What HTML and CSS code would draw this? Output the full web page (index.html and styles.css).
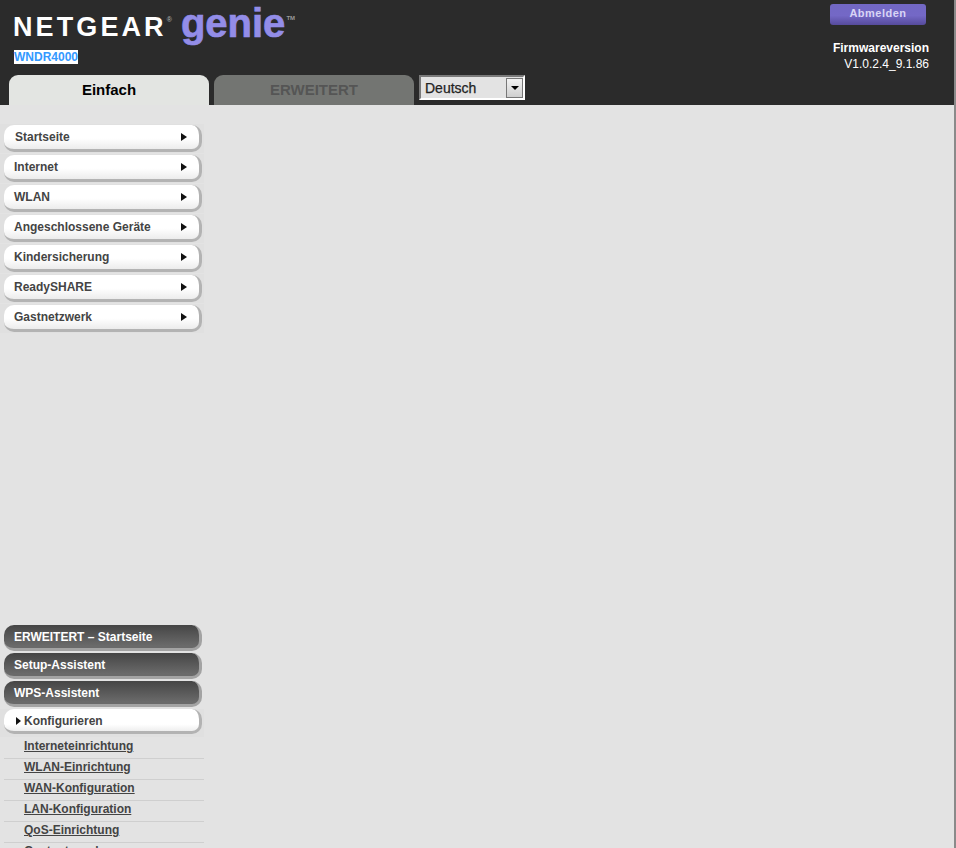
FILE: index.html
```html
<!DOCTYPE html>
<html lang="de">
<head>
<meta charset="utf-8">
<title>NETGEAR genie</title>
<link rel="stylesheet" href="styles.css">
</head>
<body>
<div class="page">
  <header class="header">
    <div class="brand">
      <div class="logo"><span class="logo-netgear">NETGEAR</span><sup class="logo-reg">®</sup><span class="logo-genie">genie</span><sup class="logo-tm">TM</sup></div>
      <div class="model"><span class="model-text">WNDR4000</span></div>
      <div class="tabs">
        <div class="tab tab-active">Einfach</div>
        <div class="tab tab-off">ERWEITERT</div>
        <div class="lang">
          <span class="lang-value">Deutsch</span>
          <span class="lang-btn"><svg width="8" height="4" viewBox="0 0 8 4"><path d="M0 0h8L4 4z" fill="#000"/></svg></span>
        </div>
      </div>
    </div>
    <div class="meta">
      <div class="logout">Abmelden</div>
      <div class="fw-label">Firmwareversion</div>
      <div class="fw-value">V1.0.2.4_9.1.86</div>
    </div>
  </header>
  <div class="content">
    <nav class="sidebar">
      <div class="group-light">
        <div class="row"><div class="btn btn-light first"><span>Startseite</span><svg class="arrow" width="6" height="8" viewBox="0 0 6 8"><path d="M0 0l6 4-6 4z"/></svg></div></div>
        <div class="row"><div class="btn btn-light"><span>Internet</span><svg class="arrow" width="6" height="8" viewBox="0 0 6 8"><path d="M0 0l6 4-6 4z"/></svg></div></div>
        <div class="row"><div class="btn btn-light"><span>WLAN</span><svg class="arrow" width="6" height="8" viewBox="0 0 6 8"><path d="M0 0l6 4-6 4z"/></svg></div></div>
        <div class="row"><div class="btn btn-light"><span>Angeschlossene Geräte</span><svg class="arrow" width="6" height="8" viewBox="0 0 6 8"><path d="M0 0l6 4-6 4z"/></svg></div></div>
        <div class="row"><div class="btn btn-light"><span>Kindersicherung</span><svg class="arrow" width="6" height="8" viewBox="0 0 6 8"><path d="M0 0l6 4-6 4z"/></svg></div></div>
        <div class="row"><div class="btn btn-light"><span>ReadySHARE</span><svg class="arrow" width="6" height="8" viewBox="0 0 6 8"><path d="M0 0l6 4-6 4z"/></svg></div></div>
        <div class="row"><div class="btn btn-light"><span>Gastnetzwerk</span><svg class="arrow" width="6" height="8" viewBox="0 0 6 8"><path d="M0 0l6 4-6 4z"/></svg></div></div>
      </div>
      <div class="group-dark">
        <div class="btn btn-dark">ERWEITERT – Startseite</div>
        <div class="btn btn-dark">Setup-Assistent</div>
        <div class="btn btn-dark">WPS-Assistent</div>
        <div class="row-open">
          <div class="btn btn-open"><svg class="arrow-open" width="5" height="8" viewBox="0 0 5 8"><path d="M0 0l5 4-5 4z"/></svg><span>Konfigurieren</span></div>
        </div>
        <ul class="sublist">
          <li><a href="#">Interneteinrichtung</a></li>
          <li><a href="#">WLAN-Einrichtung</a></li>
          <li><a href="#">WAN-Konfiguration</a></li>
          <li><a href="#">LAN-Konfiguration</a></li>
          <li><a href="#">QoS-Einrichtung</a></li>
          <li><a href="#">Gastnetzwerk</a></li>
        </ul>
      </div>
    </nav>
    <main class="main"></main>
  </div>
</div>
</body>
</html>
```
FILE: styles.css
```css
html, body {
  margin: 0;
  padding: 0;
  height: 848px;
  overflow: hidden;
  background: #e3e3e3;
}
body {
  font-family: "Liberation Sans", Arial, sans-serif;
  font-size: 12px;
}
.page {
  width: 954px;
  height: 848px;
  border-right: 2px solid #8a8a8a;
  display: flex;
  flex-direction: column;
  overflow: hidden;
}
.header {
  height: 105px;
  flex: none;
  background: #2b2b2b;
  display: flex;
  justify-content: space-between;
}
.brand {
  display: flex;
  flex-direction: column;
  padding-left: 9px;
}
.logo {
  height: 46px;
  padding: 4px 0 0 4px;
  display: flex;
  align-items: flex-start;
  white-space: nowrap;
  color: #fff;
}
.logo-netgear {
  font-size: 27px;
  font-weight: 700;
  letter-spacing: 3.1px;
  line-height: 1;
  margin-top: 10px;
}
.logo-reg {
  font-size: 7px;
  line-height: 1;
  margin: 12px 0 0 0;
  color: #bbb;
}
.logo-genie {
  font-size: 40px;
  font-weight: 700;
  line-height: 1;
  color: #938de8;
  -webkit-text-stroke: 0.7px #938de8;
  margin-left: 9px;
  margin-top: -1px;
}
.logo-tm {
  font-size: 6px;
  font-weight: 700;
  line-height: 1;
  margin: 11px 0 0 1px;
  color: #9a9a9a;
}
.model {
  height: 25px;
  padding: 0 0 0 5px;
  display: flex;
  align-items: flex-start;
}
.model-text {
  background: #fff;
  color: #3399ff;
  font-weight: 700;
  font-size: 12px;
  line-height: 14px;
}
.tabs {
  display: flex;
  align-items: flex-start;
  gap: 5px;
  height: 30px;
}
.tab {
  width: 200px;
  height: 30px;
  border-radius: 9px 9px 0 0;
  text-align: center;
  font-size: 15px;
  font-weight: 700;
  line-height: 29px;
}
.tab-active {
  background: #e3e5e2;
  color: #000;
}
.tab-off {
  background: #737572;
  color: #555;
}
.lang {
  width: 106px;
  height: 25px;
  box-sizing: border-box;
  border: 2px solid;
  border-color: #7a7a7a #fff #fff #7a7a7a;
  background: #e3e3e3;
  display: flex;
  justify-content: space-between;
  align-items: center;
  padding: 0 0 0 4px;
  font-size: 14px;
  color: #222;
  -webkit-text-stroke: 0.25px #222;
}
.lang-btn {
  width: 17px;
  height: 20px;
  box-sizing: border-box;
  border: 1px solid #777;
  background: linear-gradient(#f2f2f2, #cfcfcf);
  display: flex;
  align-items: center;
  justify-content: center;
}
.meta {
  padding: 4px 25px 0 0;
  display: flex;
  flex-direction: column;
  align-items: flex-end;
  color: #fff;
  line-height: 16px;
}
.logout {
  width: 96px;
  height: 21px;
  margin: 0 3px 15px 0;
  border-radius: 3px;
  background: linear-gradient(#7268c4, #7468c6 55%, #564b9c);
  color: #d9d5f5;
  font-size: 11px;
  font-weight: 700;
  text-align: center;
  line-height: 19px;
  letter-spacing: 0.5px;
}
.fw-label {
  font-weight: 700;
}
.content {
  flex: 1;
  display: flex;
  min-height: 0;
}
.sidebar {
  width: 204px;
  flex: none;
  padding-top: 19px;
  display: flex;
  flex-direction: column;
  overflow: hidden;
}
.group-light {
  height: 501px;
  flex: none;
}
.row {
  height: 28px;
  padding-top: 1px;
  margin-bottom: 1px;
  background: #e0e0e0;
  padding-left: 4px;
  width: 200px;
}
.btn {
  box-sizing: border-box;
  width: 198px;
  border-radius: 10px;
  font-weight: 700;
  display: flex;
  align-items: center;
}
.btn-light {
  height: 27px;
  border-right: 3px solid #b3b3b3;
  border-bottom: 3px solid #b3b3b3;
  color: #444;
  padding: 0 12px 1px 10px;
  justify-content: space-between;
  background: linear-gradient(#fff 55%, #ececec 100%);
}
.first {
  padding-left: 11px;
}
.arrow {
  fill: #111;
  flex: none;
}
.group-dark {
  display: flex;
  flex-direction: column;
  gap: 2px;
  padding-left: 4px;
}
.btn-dark {
  height: 26px;
  background: linear-gradient(#454545, #6a6a6a 90%);
  border-right: 3px solid #a3a3a3;
  border-bottom: 3px solid #a3a3a3;
  color: #fff;
  padding: 0 0 0 10px;
}
.row-open {
  margin-left: -4px;
  padding: 0 0 0 4px;
  height: 28px;
  width: 200px;
  background: #e0e0e0;
}
.btn-open {
  height: 25px;
  background: linear-gradient(#fff 70%, #eee);
  border-right: 3px solid #b3b3b3;
  border-bottom: 3px solid #b3b3b3;
  color: #444;
  padding: 1px 0 0 12px;
  gap: 3px;
}
.arrow-open {
  fill: #111;
  flex: none;
}
.sublist {
  list-style: none;
  margin: -1px 0 0 0;
  padding: 0;
  width: 200px;
}
.sublist li {
  height: 20px;
  border-bottom: 1px solid #cfcfcf;
  padding-left: 20px;
  line-height: 16px;
}
.sublist a {
  color: #444;
  font-weight: 700;
  text-decoration: underline;
}
.main {
  flex: 1;
}
```
